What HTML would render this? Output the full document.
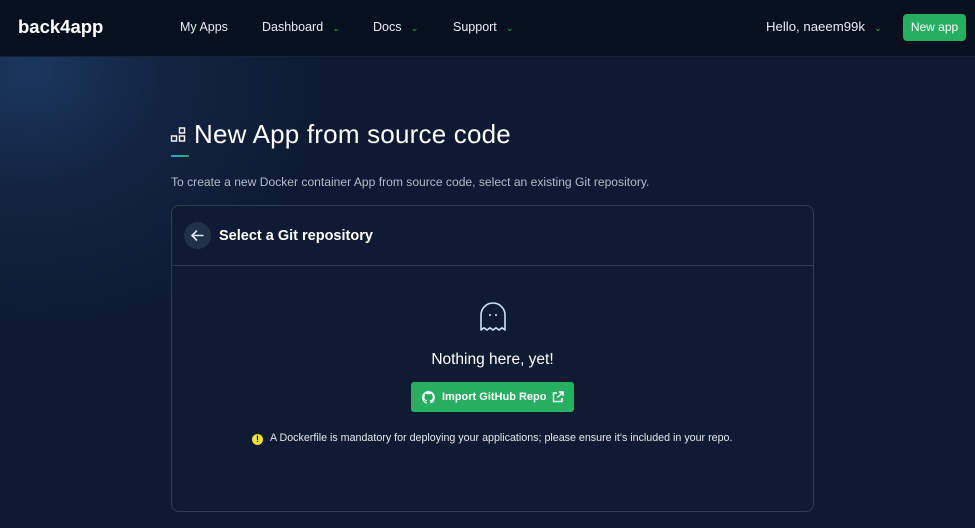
<!DOCTYPE html>
<html><head><meta charset="utf-8"><style>
*{margin:0;padding:0;box-sizing:border-box}
body{width:975px;height:528px;overflow:hidden;font-family:"Liberation Sans",sans-serif;color:#fff;
background:radial-gradient(ellipse 300px 260px at 30px 70px,#1b375e 0%,rgba(22,44,78,.55) 45%,rgba(14,26,51,0) 100%),#0e1a33;position:relative}
.nav{position:absolute;left:0;top:0;width:975px;height:57px;background:#07101f;border-bottom:1px solid #15233b}
.nav span{position:absolute;top:20px;font-size:12.5px;color:#e8ecf2}
.chev{color:#2bb35b;font-size:9px;margin-left:9px}
.logo{position:absolute;left:18px;top:16px;font-size:18.5px;font-weight:bold;color:#fff}
.btn{position:absolute;left:903px;top:14px;width:63px;height:27px;background:#27ae60;border-radius:4px;font-size:12px;text-align:center;line-height:27px}
h1{position:absolute;left:194px;top:119px;font-size:26px;font-weight:normal;letter-spacing:.2px}
.ul{position:absolute;left:171px;top:155px;width:18px;height:2px;background:linear-gradient(90deg,#1aa3d6,#27ae60)}
.sub{position:absolute;left:171px;top:175px;font-size:12.1px;color:#b4bccb}
.card{position:absolute;left:171px;top:205px;width:643px;height:307px;border:1px solid #2e3c56;border-radius:8px;background:#0f1b33}
.hd{height:60px;border-bottom:1px solid #2e3c56;position:relative}
.back{position:absolute;left:12px;top:16px;width:27px;height:27px;border-radius:50%;background:#223049}
.hd b{position:absolute;left:47px;top:22px;font-size:14.5px}
.nh{position:absolute;left:0;width:100%;top:145px;text-align:center;font-size:15.5px}
.gb{position:absolute;left:239px;top:176px;width:163px;height:30px;background:#27ae60;border-radius:3px;font-size:11px;font-weight:bold;line-height:30px}
.note{position:absolute;left:80px;top:226px;font-size:10.7px;color:#e3e7ee}
.dot{display:inline-block;width:11px;height:11px;border-radius:50%;background:#f2e13a;color:#111;font-size:9px;font-weight:bold;text-align:center;line-height:11px;margin-right:7px;vertical-align:-1px}
</style></head><body>
<div class="nav">
<div class="logo">back4app</div>
<span style="left:180px">My Apps</span>
<span style="left:262px">Dashboard<i class="chev">⌄</i></span>
<span style="left:373px">Docs<i class="chev">⌄</i></span>
<span style="left:453px">Support<i class="chev">⌄</i></span>
<span style="left:766px;font-size:13.2px;top:19px">Hello, naeem99k<i class="chev">⌄</i></span>
<div class="btn">New app</div>
</div>
<svg style="position:absolute;left:170px;top:127px" width="17" height="17" viewBox="0 0 17 17" fill="none" stroke="#fff" stroke-width="1.4"><rect x="9.5" y="1" width="5" height="5"/><rect x="1.5" y="9" width="5" height="5"/><rect x="9.5" y="9" width="5" height="5"/></svg>
<h1>New App from source code</h1>
<div class="ul"></div>
<div class="sub">To create a new Docker container App from source code, select an existing Git repository.</div>
<div class="card">
<div class="hd"><div class="back"><svg width="27" height="27" viewBox="0 0 27 27" fill="none" stroke="#dfe6f0" stroke-width="1.6" stroke-linecap="round"><path d="M19 13.5H8M12.5 9L8 13.5l4.5 4.5"/></svg></div><b>Select a Git repository</b></div>
<svg style="position:absolute;left:307px;top:95px" width="28" height="32" viewBox="0 0 28 32" fill="none" stroke="#cfe3f5" stroke-width="1.6" stroke-linejoin="round"><path d="M2 29V14a12 12 0 0 1 24 0v15l-3-2.2-3 2.2-3-2.2-3 2.2-3-2.2-3 2.2-3-2.2z"/><path d="M11 13v2M17 13v2"/></svg>
<div class="nh">Nothing here, yet!</div>
<div class="gb"><svg style="position:absolute;left:11px;top:9px" width="13" height="13" viewBox="0 0 16 16" fill="#fff"><path d="M8 0a8 8 0 0 0-2.5 15.6c.4 0 .5-.2.5-.4v-1.5c-2.2.5-2.7-1-2.7-1-.4-.9-.9-1.2-.9-1.2-.7-.5.1-.5.1-.5.8.1 1.2.8 1.2.8.7 1.3 1.9.9 2.4.7 0-.5.3-.9.5-1.1-1.8-.2-3.6-.9-3.6-4 0-.9.3-1.6.8-2.1 0-.2-.4-1 .1-2.1 0 0 .7-.2 2.2.8a7.5 7.5 0 0 1 4 0c1.5-1 2.2-.8 2.2-.8.4 1.1.2 1.9.1 2.1.5.6.8 1.3.8 2.1 0 3.1-1.9 3.8-3.6 4 .3.3.5.8.5 1.5v2.2c0 .2.1.5.6.4A8 8 0 0 0 8 0z"/></svg><span style="position:absolute;left:31px">Import GitHub Repo</span><svg style="position:absolute;left:141px;top:9px" width="12" height="12" viewBox="0 0 12 12" fill="none" stroke="#fff" stroke-width="1.5"><path d="M5 2H1.5v8.5H10V7M7 1h4v4M11 1 5.5 6.5"/></svg></div>
<div class="note"><span class="dot">!</span>A Dockerfile is mandatory for deploying your applications; please ensure it's included in your repo.</div>
</div>
</body></html>
